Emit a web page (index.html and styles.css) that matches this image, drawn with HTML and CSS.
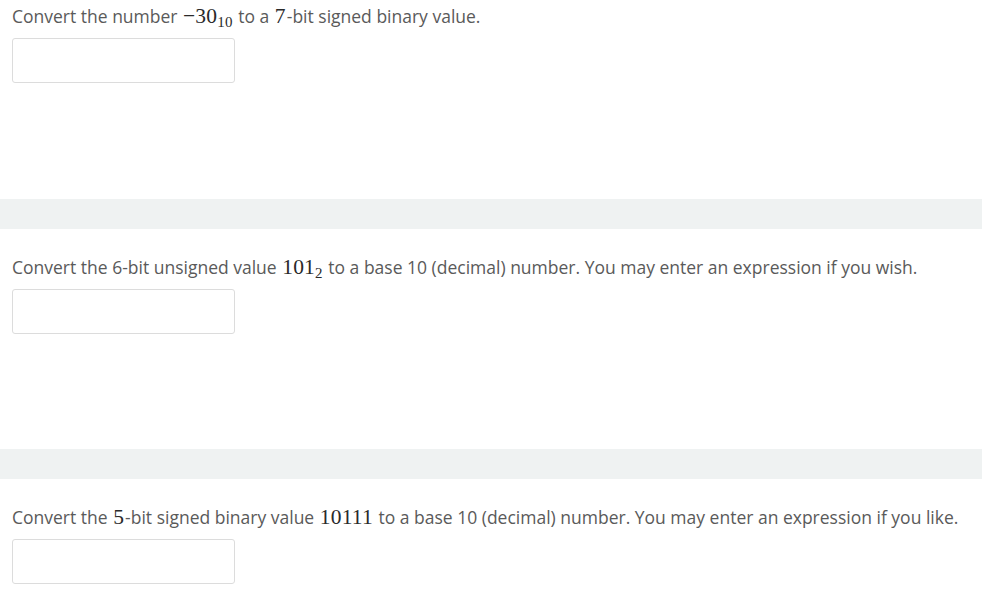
FILE: index.html
```html
<!DOCTYPE html>
<html>
<head>
<meta charset="utf-8">
<link rel="stylesheet" href="styles.css">
</head>
<body>
<div class="page">
  <section class="question first">
    <p class="prompt">Convert the number <span class="math">−30<sub>10</sub></span> to a <span class="math">7</span>-bit signed binary value.</p>
    <div class="answer"></div>
  </section>
  <div class="band"></div>
  <section class="question">
    <p class="prompt">Convert the 6-bit unsigned value <span class="math">101<sub>2</sub></span> to a base 10 (decimal) number. You may enter an expression if you wish.</p>
    <div class="answer"></div>
  </section>
  <div class="band"></div>
  <section class="question last">
    <p class="prompt">Convert the <span class="math">5</span>-bit signed binary value <span class="math">10111</span> to a base 10 (decimal) number. You may enter an expression if you like.</p>
    <div class="answer"></div>
  </section>
</div>
</body>
</html>
```
FILE: styles.css
```css
html, body {
  margin: 0;
  padding: 0;
  background: #ffffff;
  overflow: hidden;
}
.page {
  display: flex;
  flex-direction: column;
  font-family: "Open Sans", "Liberation Sans", sans-serif;
  color: #5a5a5a;
}
.question {
  box-sizing: border-box;
  height: 220px;
  padding: 28px 12px 0;
}
.question.first {
  height: 199px;
  padding-top: 6px;
}
.question.last {
  height: auto;
}
.prompt {
  margin: 0;
  font-size: 17.5px;
  line-height: 20px;
  height: 20px;
  white-space: nowrap;
}
.math {
  font-family: "Liberation Serif", "DejaVu Serif", serif;
  font-size: 21.5px;
  color: #2a2a2a;
  line-height: 0;
  letter-spacing: 0.2px;
  margin: 0 1px;
}
.math sub {
  font-size: 15px;
  line-height: 0;
  vertical-align: -4px;
}
.answer {
  box-sizing: border-box;
  width: 223px;
  height: 45px;
  margin-top: 12px;
  border: 1px solid #dcdcdc;
  border-radius: 3px;
  background: #fff;
}
.band {
  height: 30px;
  background: #eff2f2;
}
```
